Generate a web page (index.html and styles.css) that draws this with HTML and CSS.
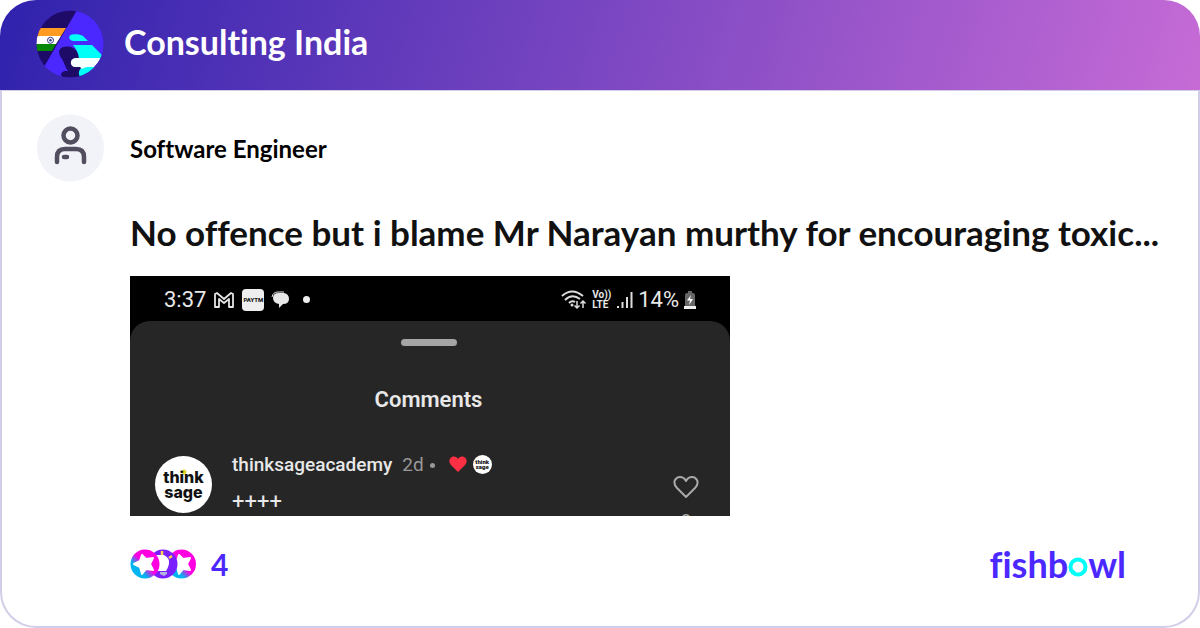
FILE: index.html
```html
<!DOCTYPE html>
<html lang="en">

<head>
    <meta charset="UTF-8">
    <meta name="viewport" content="width=device-width, initial-scale=1.0">
    <title>Consulting India | Fishbowl</title>
    <link rel="stylesheet" href="styles.css">
</head>

<body>
    <article class="card">
        <header class="card-header">
            <svg class="bowl-icon" viewBox="0 0 68 68" aria-hidden="true">
                <clipPath id="bowlClip"><circle cx="34" cy="34" r="33.5"/></clipPath>
                <g clip-path="url(#bowlClip)">
                    <rect width="68" height="68" fill="#4b28ff"/>
                    <path d="M0 0H41L8 57L0 68Z" fill="#1e0b68"/>
                    <path d="M0 18H30L25 26H0Z" fill="#ff9a22"/>
                    <path d="M0 26H25L20 34H0Z" fill="#fff"/>
                    <path d="M0 34H20L16 41H0Z" fill="#078607"/>
                    <circle cx="14.5" cy="30.3" r="3" fill="none" stroke="#30308f"/>
                    <circle cx="14.5" cy="30.3" r="1.2" fill="#30308f"/>
                    <path d="M36 24.500C40 24 44 24 47 26L52 31H38C32 31 32 25 36 24.500Z" fill="#00fff7"/>
                    <path d="M27 37C36 35 42 39 43 48L50 58V68H30C23 67 24 62 29 61H32C30 58 29 55 26 49C23 45 21 39 27 37Z" fill="#1e0b68"/>
                    <path d="M37 35H56L68 47V50H43C43 43 40 39 37 35Z" fill="#00fff7"/>
                    <path d="M48 57H68V68H46C41 66 42 58 48 57Z" fill="#00fff7"/>
                    <path d="M39 48H66L58 57H52C49 57 48 58 46 59L44 57H39C34 57 33 49 39 48Z" fill="#f5ffff"/>
                </g>
            </svg>
            <h1 class="bowl-name">Consulting India</h1>
        </header>

        <div class="card-body">
            <div class="author">
                <svg class="author-icon" viewBox="0 0 68 68" aria-hidden="true">
                    <circle cx="34.500" cy="34" r="33.500" fill="#f2f3f8"/>
                    <g fill="none" stroke="#534d60" stroke-width="4.500" stroke-linecap="round">
                        <circle cx="34.500" cy="21.500" r="7"/>
                        <path d="M21 48V43Q21 35 29 35H40Q48 35 48 43V48"/>
                        <path d="M28 43H31"/>
                    </g>
                </svg>
                <span class="author-name">Software Engineer</span>
            </div>

            <div class="post">
                <h2 class="post-title">No offence but i blame Mr Narayan murthy for encouraging toxic...</h2>

                <div class="phone">
                    <div class="status-bar">
                        <div class="status-group">
                            <span class="status-text">3:37</span>
                            <svg width="22" height="18" viewBox="0 0 22 18" aria-hidden="true">
                                <path d="M2 16V3L4 2L11 8L18 2L20 3V16H16V8L11 12L6 8V16Z" fill="none" stroke="#e4e4e4" stroke-width="1.8" stroke-linejoin="round"/>
                            </svg>
                            <span class="pay-badge">PAYTM</span>
                            <svg width="20" height="18" viewBox="0 0 20 18" aria-hidden="true">
                                <path d="M2 7Q2 2 8 2H13Q18 3 18 8Q18 13 12 13L8 17V13Q2 12 2 7Z" fill="#e8e8e8"/>
                                <path d="M1 6Q2 1 7 1H13" fill="none" stroke="#e8e8e8"/>
                            </svg>
                            <span class="status-dot"></span>
                        </div>
                        <div class="status-group status-right">
                            <svg width="26" height="20" viewBox="0 0 26 20" aria-hidden="true">
                                <g fill="none" stroke="#ddd" stroke-width="2">
                                    <path d="M1 6Q11 -3 22 6M4 10Q11 3 19 9M8 13Q11 10 14 12"/>
                                    <path d="M16 11V18M13.500 15.500L16 18L18.500 15.500M22 18V11M19.500 13.500L22 11L24.500 13.500" stroke-width="1.500"/>
                                </g>
                                <circle cx="11" cy="15" r="1.500" fill="#ddd"/>
                            </svg>
                            <span class="lte"><span>Vo))</span><span>LTE</span></span>
                            <svg width="17" height="18" viewBox="0 0 17 18" aria-hidden="true">
                                <path d="M2 15V17M6.500 11V17M11 6V17M15.500 1V17" stroke="#ddd" stroke-width="2"/>
                            </svg>
                            <span class="status-text">14%</span>
                            <svg width="12" height="18" viewBox="0 0 12 18" aria-hidden="true">
                                <path d="M3 2H4V0H8V2H9Q11 2 11 4V15H1V4Q1 2 3 2Z" fill="#666"/>
                                <path d="M0 15H12V18H0Z" fill="#eee"/>
                                <path d="M7 4L3 9.500H6L5 14L9 8H6Z" fill="#fff"/>
                            </svg>
                        </div>
                    </div>

                    <div class="sheet">
                        <div class="sheet-handle"></div>
                        <h3 class="sheet-title">Comments</h3>
                        <div class="comment">
                            <div class="comment-avatar">think<br>sage</div>
                            <div class="comment-main">
                                <div class="comment-meta">
                                    <strong class="comment-user">thinksageacademy</strong>
                                    <span class="comment-time">2d</span>
                                    <span class="comment-dot"></span>
                                    <svg width="18" height="17" viewBox="0 0 18 17" aria-hidden="true">
                                        <path d="M9 16L2 9C-3 3 5 -3 9 3C13 -3 21 3 16 9Z" fill="#ff3044"/>
                                    </svg>
                                    <span class="mini-avatar">think<br>sage</span>
                                </div>
                                <p class="comment-text">++++</p>
                            </div>
                            <div class="comment-like">
                                <svg width="26" height="24" viewBox="0 0 26 24" aria-hidden="true">
                                    <path d="M13 22L4 13C-2 6 4 2 7 2C10 2 12 4 13 6C14 4 16 2 19 2C22 2 28 6 22 13Z" fill="none" stroke="#a9a9a9" stroke-width="2" stroke-linejoin="round"/>
                                </svg>
                                <span>2</span>
                            </div>
                        </div>
                    </div>
                </div>

                <footer class="card-footer">
                    <div class="reactions">
                        <svg width="66" height="30" viewBox="0 0 66 30" aria-hidden="true">
                            <defs>
                                <linearGradient id="starFill" x1="0" y1="1" x2="1" y2="0">
                                    <stop offset="0.300" stop-color="#00b5f0"/>
                                    <stop offset="0.500" stop-color="#ff00e1"/>
                                </linearGradient>
                                <path id="star" d="M12 6L16 10L23 9L20 15L23 21L16 20L12 25L10 18L4 15L10 12Z" fill="#fff" stroke="#fff" stroke-width="2" stroke-linejoin="round"/>
                            </defs>
                            <circle cx="51.500" cy="15" r="14.500" fill="url(#starFill)"/>
                            <use href="#star" x="37"/>
                            <circle cx="33" cy="15" r="14.500" fill="#7a1fff"/>
                            <path d="M24 6H34Q40 9 39 15Q38 19 36 22H24Z" fill="#fff"/>
                            <path d="M30 23H37V25L34 27L30 25Z" fill="#b3b5dc"/>
                            <path d="M32 2V6M39 9L42 7" stroke="#ffd34d" stroke-width="2.500"/>
                            <circle cx="15" cy="15" r="14.500" fill="url(#starFill)"/>
                            <use href="#star"/>
                        </svg>
                        <span class="reaction-count">4</span>
                    </div>
                    <div class="brand">
                        <span>fishb</span>
                        <svg class="brand-o" viewBox="0 0 20 20" role="img" aria-label="o">
                            <circle cx="10" cy="10" r="7.500" fill="none" stroke="#00fff7" stroke-width="4"/>
                            <path d="M3 11L3 17L8 15Z" fill="#00fff7"/>
                        </svg>
                        <span>wl</span>
                    </div>
                </footer>
            </div>
        </div>
    </article>
</body>

</html>
```
FILE: styles.css
```css
* {
    box-sizing: border-box;
}

body {
    margin: 0;
    background-color: #fff;
    font-family: Lato, sans-serif;
    font-variant-ligatures: none;
}

h1,
h2,
h3,
p {
    margin: 0;
}

svg {
    display: block;
    flex-shrink: 0;
}

.card {
    display: flex;
    flex-direction: column;
    min-height: 100vh;
}

.card-header {
    display: flex;
    align-items: center;
    gap: 20px;
    padding: 10px 36px 12px;
    border-radius: 36px 36px 0 0;
    background: linear-gradient(107deg, #2f22ad, #c66bd6);
}

.bowl-icon,
.author-icon {
    width: 68px;
    height: 68px;
}

.bowl-name {
    padding-bottom: 4px;
    color: #fff;
    font-size: 34px;
    font-weight: 700;
    line-height: 44px;
}

.card-body {
    flex: 1;
    padding: 23px 34px;
    border: 2px solid #d0cee8;
    border-top-width: 1px;
    border-radius: 0 0 36px 36px;
}

/* Author */
.author {
    display: flex;
    align-items: center;
    gap: 26px;
}

.author-name {
    color: #000;
    font-size: 24px;
    font-weight: 700;
}

/* Post */
.post {
    padding-left: 94px;
}

.post-title {
    margin: 28px 0 22px;
    color: #111;
    font-size: 35px;
    font-weight: 700;
    line-height: 44px;
    white-space: nowrap;
}

.phone {
    display: flex;
    flex-direction: column;
    max-width: 600px;
    height: 240px;
    overflow: hidden;
    background-color: #000;
    color: #e8e8e8;
    font-family: Roboto, sans-serif;
}

.status-bar {
    display: flex;
    flex-shrink: 0;
    align-items: center;
    justify-content: space-between;
    height: 45px;
    padding: 2px 34px 0;
}

.status-group {
    display: flex;
    align-items: center;
    gap: 7px;
}

.status-right {
    gap: 5px;
}

.status-text {
    font-size: 22px;
    line-height: 24px;
}

.pay-badge {
    width: 22px;
    border-radius: 4px;
    background-color: #eee;
    color: #222;
    font-size: 6px;
    font-weight: 900;
    line-height: 22px;
    text-align: center;
}

.status-dot {
    width: 7px;
    height: 7px;
    margin-left: 5px;
    border-radius: 50%;
    background-color: #eee;
}

.lte {
    display: flex;
    flex-direction: column;
    font-size: 10px;
    font-weight: 700;
    line-height: 10px;
}

.sheet {
    flex: 1;
    padding: 18px 28px 0 25px;
    border-radius: 20px 20px 0 0;
    background-color: #262626;
}

.sheet-handle {
    width: 56px;
    height: 7px;
    margin: 0 auto;
    border-radius: 4px;
    background-color: #a5a5a5;
}

.sheet-title {
    margin: 40px 0;
    font-size: 22px;
    font-weight: 600;
    line-height: 28px;
    text-align: center;
}

.comment {
    display: flex;
    gap: 20px;
    padding-right: 3px;
}

.comment-avatar {
    width: 57px;
    height: 57px;
    margin-top: 2px;
    padding-top: 14px;
    border-radius: 50%;
    background: radial-gradient(circle at 29px 16px, #e2d52c 2px, #fff 3px);
    color: #111;
    font-family: Inter, sans-serif;
    font-size: 16px;
    font-weight: 800;
    line-height: 15px;
    text-align: center;
}

.comment-main {
    flex: 1;
}

.comment-meta {
    display: flex;
    align-items: center;
    height: 20px;
}

.comment-user {
    font-size: 19px;
    font-weight: 500;
}

.comment-time {
    margin-left: 10px;
    color: #999;
    font-size: 19px;
}

.comment-dot {
    width: 5px;
    height: 5px;
    margin: 2px 14px 0 6px;
    border-radius: 50%;
    background-color: #999;
}

.mini-avatar {
    width: 19px;
    height: 19px;
    margin-left: 6px;
    padding-top: 4px;
    border-radius: 50%;
    background-color: #fff;
    color: #111;
    font-size: 6px;
    font-weight: 900;
    line-height: 5px;
    text-align: center;
}

.comment-text {
    margin-top: 16px;
    font-size: 22px;
    line-height: 24px;
}

.comment-like {
    display: flex;
    flex-direction: column;
    align-items: center;
    gap: 12px;
    padding-top: 21px;
    color: #a9a9a9;
    font-size: 18px;
    line-height: 20px;
}

/* Footer */
.card-footer {
    display: flex;
    align-items: center;
    justify-content: space-between;
    padding: 30px 38px 0 0;
}

.reactions {
    display: flex;
    align-items: center;
    gap: 15px;
}

.reaction-count {
    color: #4b28ff;
    font-size: 30px;
    font-weight: 700;
    line-height: 36px;
}

.brand {
    display: flex;
    align-items: center;
    color: #4b28ff;
    font-size: 36px;
    font-weight: 700;
    line-height: 36px;
}

.brand-o {
    width: 20px;
    height: 20px;
    margin-top: 6px;
}
```
